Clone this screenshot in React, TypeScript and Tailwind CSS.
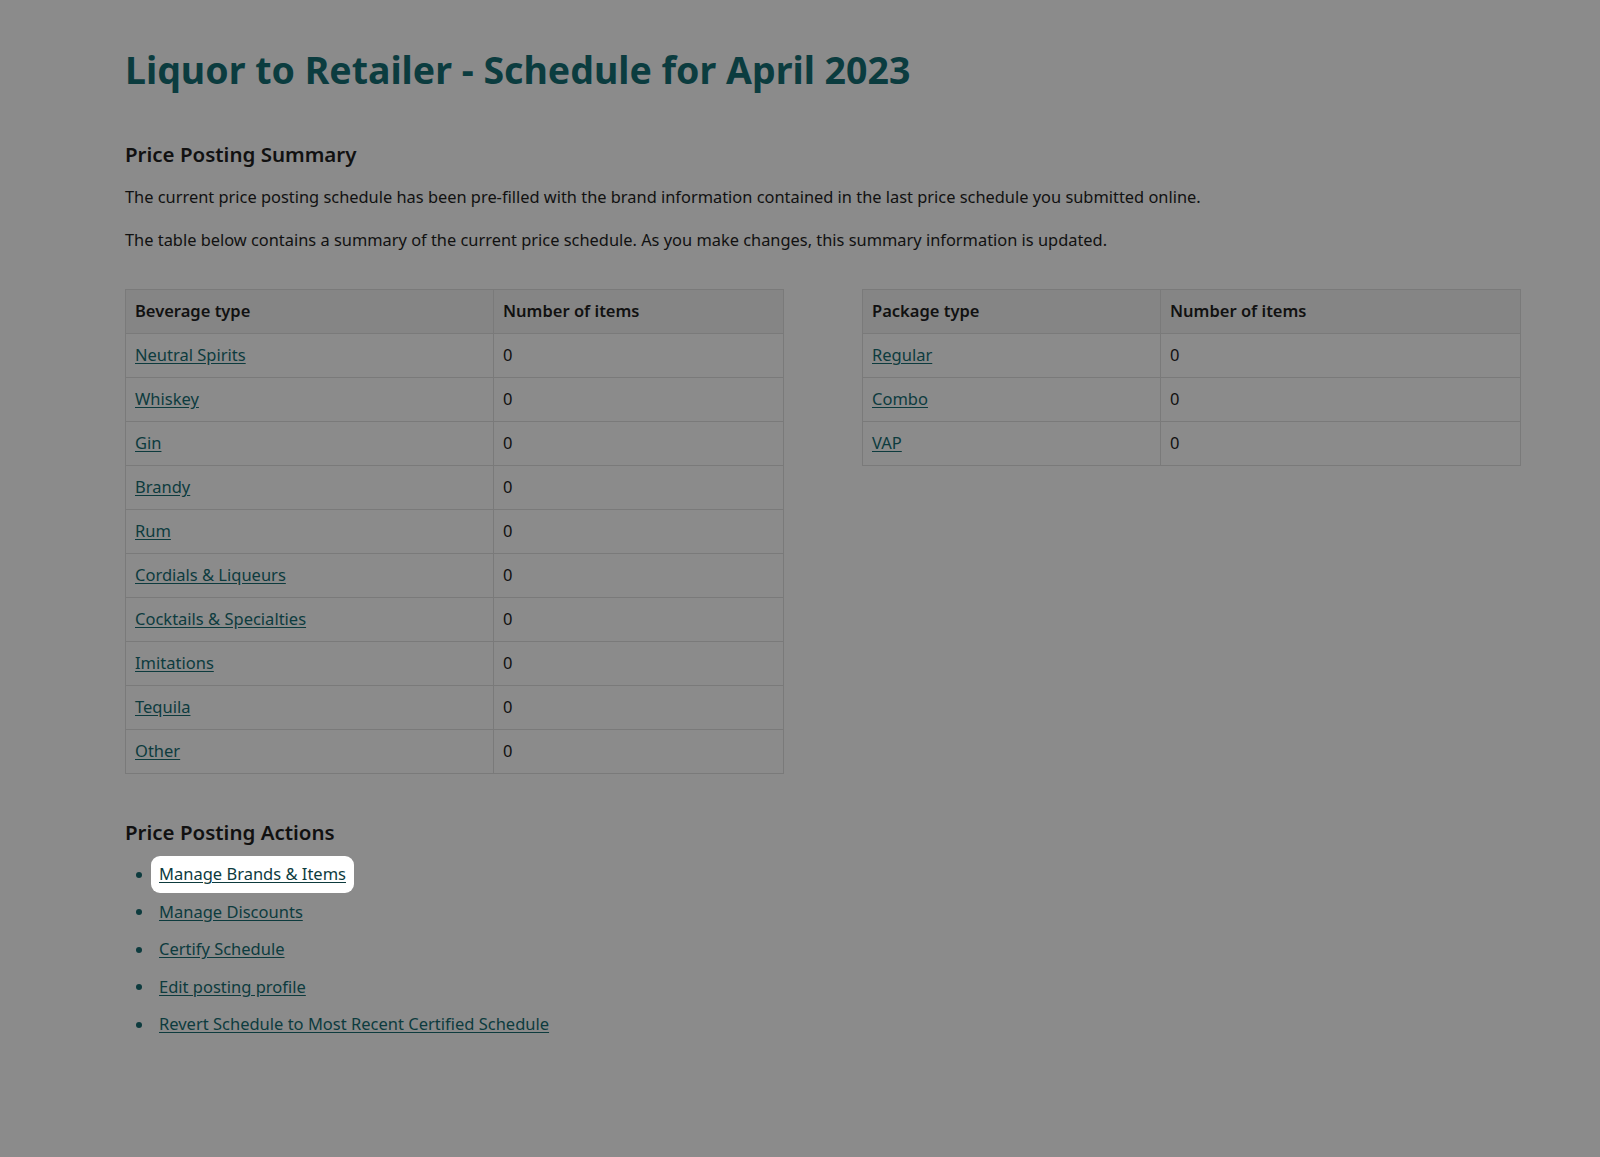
const bev = ["Neutral Spirits", "Whiskey", "Gin", "Brandy", "Rum", "Cordials & Liqueurs", "Cocktails & Specialties", "Imitations", "Tequila", "Other"]
const pkg = ["Regular", "Combo", "VAP"]
const actions = ["Manage Brands & Items", "Manage Discounts", "Certify Schedule", "Edit posting profile", "Revert Schedule to Most Recent Certified Schedule"]

function SummaryTable({ head, rows, className, split }: { head: string; rows: string[]; className: string; split: string }) {
  return (
    <table className={`border-collapse border border-[#7a7a7a] text-[16.5px] ${className}`}>
      <thead>
        <tr className="h-[44px] bg-[#858585]">
          <th className={`border border-[#7a7a7a] px-[9px] text-left font-semibold ${split}`}>{head}</th>
          <th className="border border-[#7a7a7a] px-[9px] text-left font-semibold">Number of items</th>
        </tr>
      </thead>
      <tbody>
        {rows.map((r) => (
          <tr key={r} className="h-[44px]">
            <td className="border border-[#7a7a7a] px-[9px]">
              <a href="#" className="text-[#0d3b3e] underline underline-offset-2">{r}</a>
            </td>
            <td className="border border-[#7a7a7a] px-[9px]">0</td>
          </tr>
        ))}
      </tbody>
    </table>
  )
}

export default function App() {
  return (
    <div className="min-h-[1157px] bg-[#8b8b8b] text-[#111] font-['Noto_Sans',sans-serif]">
      <div className="pl-[125px] pr-[79px] pt-[47px]">
        <h1 className="text-[37.5px] font-bold text-[#0b3c3f] leading-tight">Liquor to Retailer - Schedule for April 2023</h1>

        {/* Summary */}
        <h2 className="mt-[45px] text-[20.5px] font-semibold">Price Posting Summary</h2>
        <p className="mt-[15px] text-[16.4px]">The current price posting schedule has been pre-filled with the brand information contained in the last price schedule you submitted online.</p>
        <p className="mt-[19px] text-[16.4px]">The table below contains a summary of the current price schedule. As you make changes, this summary information is updated.</p>

        <div className="mt-[36px] flex items-start gap-[78px]">
          <SummaryTable head="Beverage type" rows={bev} className="w-[659px]" split="w-[368px]" />
          <SummaryTable head="Package type" rows={pkg} className="w-[659px]" split="w-[298px]" />
        </div>

        {/* Actions */}
        <h2 className="mt-[43px] text-[20.5px] font-semibold">Price Posting Actions</h2>
        <ul className="mt-[12px] flex flex-col gap-[7.5px] text-[16.5px]">
          {actions.map((a, i) => (
            <li key={a} className="flex items-center h-[30px]">
              <span className="ml-[11px] mr-[17px] h-[6px] w-[6px] rounded-full bg-[#0d3b3e]" />
              <a
                href="#"
                className={`text-[#0d3b3e] underline underline-offset-2 ${i === 0 ? "-ml-[8px] rounded-[9px] bg-white px-[8px] py-[6px] text-[#0b5558]" : ""}`}
              >
                {a}
              </a>
            </li>
          ))}
        </ul>
      </div>
    </div>
  )
}
